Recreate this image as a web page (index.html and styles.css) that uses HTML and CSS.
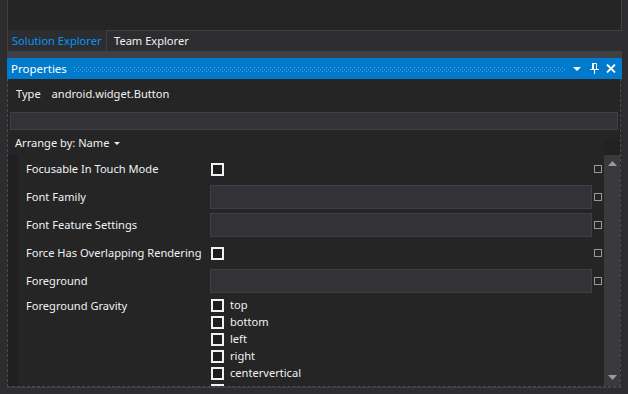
FILE: index.html
```html
<!DOCTYPE html>
<html lang="en">

<head>
  <meta charset="UTF-8" />
  <title>Properties</title>
  <link rel="stylesheet" href="styles.css">
</head>

<body>

  <div class="top-pane"></div>

  <div class="tabstrip">
    <div class="tab active">Solution Explorer</div>
    <div class="tab">Team Explorer</div>
    <div class="tab-fill"></div>
  </div>

  <div class="toolwin">
    <div class="titlebar">
      <span class="title">Properties</span>
      <svg class="grip" height="5">
        <defs>
          <pattern id="dots" width="4" height="4" patternUnits="userSpaceOnUse">
            <rect x="0" y="0" width="1" height="1" fill="#5aa5dc" />
            <rect x="2" y="2" width="1" height="1" fill="#5aa5dc" />
          </pattern>
        </defs>
        <rect width="100%" height="5" fill="url(#dots)" />
      </svg>
      <svg class="ico ico-drop" width="8" height="4" viewBox="0 0 8 4">
        <path d="M0 0h8L4 4z" fill="#fff" />
      </svg>
      <svg class="ico ico-pin" width="9" height="11" viewBox="0 0 9 11">
        <path d="M2.5 0.5h4v6h-4z" fill="none" stroke="#fff" />
        <path d="M2 0h2v6H2z" fill="#fff" />
        <path d="M0 6h9v1H0zM4 7h1v4H4z" fill="#fff" />
      </svg>
      <svg class="ico ico-close" width="10" height="9" viewBox="0 0 10 9">
        <path d="M1 0.5l8 8M9 0.5l-8 8" stroke="#fff" stroke-width="1.8" />
      </svg>
    </div>

    <div class="panel">
      <div class="type-row">
        <span class="type-label">Type</span>
        <span>android.widget.Button</span>
      </div>
      <div class="search"></div>
      <div class="arrange">
        Arrange by: Name
        <svg class="caret" width="6" height="3" viewBox="0 0 6 3"><path d="M0 0h6L3 3z" fill="#f1f1f1" /></svg>
        <div class="arrange-corner"></div>
      </div>

      <div class="grid-wrap">
        <div class="gutter"></div>
        <div class="rows">
          <div class="row">
            <div class="label">Focusable In Touch Mode</div>
            <div class="value"><span class="cb"></span></div>
            <div class="marker"><span class="mk"></span></div>
          </div>
          <div class="row">
            <div class="label">Font Family</div>
            <div class="value"><div class="textbox"></div></div>
            <div class="marker"><span class="mk"></span></div>
          </div>
          <div class="row">
            <div class="label">Font Feature Settings</div>
            <div class="value"><div class="textbox"></div></div>
            <div class="marker"><span class="mk"></span></div>
          </div>
          <div class="row">
            <div class="label">Force Has Overlapping Rendering</div>
            <div class="value"><span class="cb"></span></div>
            <div class="marker"><span class="mk"></span></div>
          </div>
          <div class="row">
            <div class="label">Foreground</div>
            <div class="value"><div class="textbox"></div></div>
            <div class="marker"><span class="mk"></span></div>
          </div>
          <div class="row row-list">
            <div class="label">Foreground Gravity</div>
            <div class="value">
              <ul class="flags">
                <li><span class="cb"></span>top</li>
                <li><span class="cb"></span>bottom</li>
                <li><span class="cb"></span>left</li>
                <li><span class="cb"></span>right</li>
                <li><span class="cb"></span>centervertical</li>
                <li><span class="cb"></span>fillvertical</li>
              </ul>
            </div>
            <div class="marker"></div>
          </div>
        </div>
        <div class="scrollbar">
          <svg width="9" height="5" viewBox="0 0 9 5"><path d="M4.5 0L9 5H0z" fill="#999" /></svg>
          <svg width="9" height="5" viewBox="0 0 9 5"><path d="M0 0h9L4.5 5z" fill="#999" /></svg>
        </div>
      </div>
    </div>
  </div>

</body>

</html>
```

FILE: styles.css
```css
/* ─── BASE ───────────────────────────────────────────────────────── */
* {
  box-sizing: border-box;
}

body {
  margin: 0;
  width: 628px;
  height: 394px;
  overflow: hidden;
  background: #2d2d30;
  color: #f1f1f1;
  font-family: "Noto Sans", "Open Sans", sans-serif;
  font-size: 11.1px;
}

/* ─── SOLUTION EXPLORER (ABOVE) ──────────────────────────────────── */
.top-pane {
  margin-left: 7px;
  width: 615px;
  height: 30px;
  background: #252526;
  border-left: 1px solid #3f3f46;
  border-right: 1px solid #3f3f46;
}

.tabstrip {
  display: flex;
  margin-left: 7px;
  width: 615px;
  height: 21px;
}

.tab {
  height: 21px;
  line-height: 20px;
  padding: 0 8px 0 7px;
  border-left: 1px solid #3f3f46;
  border-top: 1px solid #3f3f46;
  white-space: nowrap;
}

.tab.active {
  width: 99px;
  padding-left: 4px;
  line-height: 21px;
  border-top: none;
  color: #0097fb;
}

.tab-fill {
  flex: 1;
  border-top: 1px solid #3f3f46;
}

/* ─── TOOL WINDOW ────────────────────────────────────────────────── */
.toolwin {
  margin-left: 7px;
  width: 614px;
}

.titlebar {
  display: flex;
  align-items: center;
  height: 28px;
  margin-right: -1px;
  padding: 0 6px 0 4px;
  background: #007acc;
  border-top: 7px solid #3f3f46;
  color: #fff;
}

.title {
  font-size: 11.5px;
}

.grip {
  flex: 1;
  margin: 1px 7px 0 7px;
}

.ico {
  flex: none;
}

.ico-drop {
  margin-right: 9px;
}

.ico-pin {
  margin-right: 7px;
}

.panel {
  height: 308px;
  background: #252526;
  border-left: 1px dashed #4a4a4f;
  border-right: 1px dashed #4a4a4f;
  border-bottom: 1px dashed #4a4a4f;
  box-shadow: 0 1px 0 #3f3f46;
  display: flex;
  flex-direction: column;
}

.type-row {
  height: 28px;
  padding: 3px 0 0 8px;
  line-height: 24px;
}

.type-label {
  margin-right: 8px;
}

.search {
  height: 18px;
  margin: 5px 2px 0 2px;
  background: #333337;
  border: 1px solid #3f3f46;
}

.arrange {
  position: relative;
  display: flex;
  align-items: center;
  height: 25px;
  padding: 2px 0 1px 7px;
  line-height: 22px;
}

.caret {
  margin: 1px 0 0 5px;
}

.arrange-corner {
  position: absolute;
  right: 0;
  bottom: 0;
  width: 16px;
  height: 15px;
  background: #222223;
}

/* ─── PROPERTY GRID ──────────────────────────────────────────────── */
.grid-wrap {
  flex: 1;
  display: flex;
  overflow: hidden;
}

.gutter {
  width: 10px;
  background: #202021;
}

.rows {
  flex: 1;
  overflow: hidden;
}

.row {
  display: flex;
  align-items: center;
  height: 28px;
}

.label {
  width: 192px;
  padding: 0 0 2px 8px;
  white-space: nowrap;
}

.value {
  width: 382px;
  display: flex;
  align-items: center;
}

.marker {
  width: 12px;
  display: flex;
  align-items: center;
}

.mk {
  width: 8px;
  height: 8px;
  margin-left: 2px;
  border: 1px solid #999;
}

.textbox {
  width: 100%;
  height: 24px;
  background: #333337;
  border: 1px solid #3f3f46;
}

.cb {
  display: inline-block;
  flex: none;
  width: 13px;
  height: 13px;
  margin-left: 1px;
  background: #1e1e1e;
  border: 2px solid #f1f1f1;
}

.row-list {
  height: auto;
  align-items: flex-start;
}

.row-list .label {
  line-height: 21px;
}

.flags {
  list-style: none;
  margin: 0;
  padding: 1px 0 0;
}

.flags li {
  display: flex;
  align-items: center;
  height: 17px;
  line-height: 16px;
}

.flags .cb {
  margin-right: 6px;
  margin-top: 1px;
}

.scrollbar {
  width: 16px;
  background: #3a3a3e;
  display: flex;
  flex-direction: column;
  align-items: center;
  justify-content: space-between;
  padding: 6px 0 6px;
}
```
